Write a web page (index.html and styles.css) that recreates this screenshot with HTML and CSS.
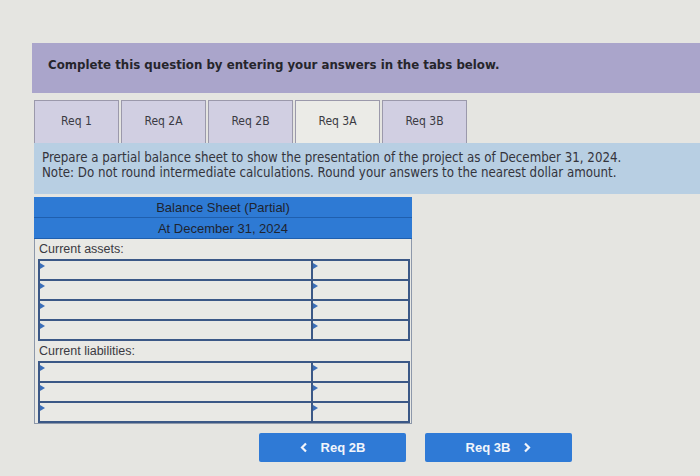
FILE: index.html
```html
<!DOCTYPE html>
<html>
<head>
<meta charset="utf-8">
<link rel="stylesheet" href="styles.css">
</head>
<body>
<div class="page">
  <div class="banner">Complete this question by entering your answers in the tabs below.</div>
  <div class="tabs">
    <div class="tab">Req 1</div>
    <div class="tab">Req 2A</div>
    <div class="tab">Req 2B</div>
    <div class="tab active">Req 3A</div>
    <div class="tab">Req 3B</div>
  </div>
  <div class="instructions">
    <p>Prepare a partial balance sheet to show the presentation of the project as of December 31, 2024.</p>
    <p>Note: Do not round intermediate calculations. Round your answers to the nearest dollar amount.</p>
  </div>
  <div class="sheet">
    <div class="head">Balance Sheet (Partial)</div>
    <div class="head">At December 31, 2024</div>
    <div class="body">
      <div class="label">Current assets:</div>
      <div class="inputs">
        <div class="row"><div class="cell name"></div><div class="cell amt"></div></div>
        <div class="row"><div class="cell name"></div><div class="cell amt"></div></div>
        <div class="row"><div class="cell name"></div><div class="cell amt"></div></div>
        <div class="row"><div class="cell name"></div><div class="cell amt"></div></div>
      </div>
      <div class="label">Current liabilities:</div>
      <div class="inputs">
        <div class="row"><div class="cell name"></div><div class="cell amt"></div></div>
        <div class="row"><div class="cell name"></div><div class="cell amt"></div></div>
        <div class="row"><div class="cell name"></div><div class="cell amt"></div></div>
      </div>
    </div>
  </div>
  <div class="nav">
    <div class="btn"><svg class="chev" width="8" height="11" viewBox="0 0 8 11"><path d="M6 1.5 L2 5.5 L6 9.5" fill="none" stroke="#f2f5fb" stroke-width="2.2"/></svg><span>Req 2B</span></div>
    <div class="btn"><span>Req 3B</span><svg class="chev" width="8" height="11" viewBox="0 0 8 11"><path d="M2 1.5 L6 5.5 L2 9.5" fill="none" stroke="#f2f5fb" stroke-width="2.2"/></svg></div>
  </div>
</div>
</body>
</html>
```
FILE: styles.css
```css
html, body {
  margin: 0;
  padding: 0;
  background: #e5e5e1;
  width: 700px;
  height: 476px;
  overflow: hidden;
}
.page {
  padding-top: 43px;
  font-family: "DejaVu Sans Condensed", "DejaVu Sans", sans-serif;
  color: #2a2a2e;
}
.banner {
  margin-left: 32px;
  height: 50px;
  box-sizing: border-box;
  background: #aaa5cb;
  padding-left: 16px;
  padding-bottom: 7px;
  display: flex;
  align-items: center;
  font-weight: bold;
  font-size: 13.1px;
  color: #26252c;
}
.tabs {
  margin-left: 34px;
  margin-top: 7px;
  display: flex;
  gap: 2px;
}
.tab {
  width: 85px;
  height: 43px;
  box-sizing: border-box;
  background: #d1cfe2;
  border: 1px solid #9b99ab;
  border-bottom: none;
  display: flex;
  align-items: center;
  justify-content: center;
  font-size: 12px;
  color: #3a3a42;
  padding-bottom: 2px;
}
.tab.active {
  background: #ebebe7;
}
.instructions {
  margin-left: 34px;
  height: 51px;
  background: #b8cfe3;
  padding: 8px 8px 0;
  box-sizing: border-box;
  font-size: 13.2px;
  color: #34343c;
  line-height: 14.5px;
}
.instructions p { margin: 0; }
.sheet {
  margin-left: 34px;
  margin-top: 3px;
  width: 378px;
  font-family: "Liberation Sans Narrow", "Liberation Sans", sans-serif;
  font-size: 13px;
}
.head {
  height: 20px;
  background: #2e7ad4;
  border-bottom: 1px solid #1f5fae;
  display: flex;
  align-items: center;
  justify-content: center;
  color: #1e2430;
}
.body {
  border: 1px solid #8d98aa;
  border-top: none;
  background: #e9e9e5;
  padding-right: 1px;
}
.label {
  height: 20px;
  display: flex;
  align-items: center;
  padding-left: 4px;
  color: #3a3a42;
  font-size: 12.5px;
}
.inputs {
  margin-left: 3px;
}
.row {
  display: flex;
  height: 18px;
  border-top: 2px solid #3b5886;
}
.inputs .row:last-child {
  border-bottom: 2px solid #3b5886;
}
.cell {
  position: relative;
  border-left: 2px solid #3b5886;
}
.cell::before {
  content: "";
  position: absolute;
  left: 0;
  top: 2px;
  border-left: 5px solid #3b6eb8;
  border-top: 3px solid transparent;
  border-bottom: 3px solid transparent;
}
.name { width: 271px; }
.amt {
  flex: 1;
  border-right: 2px solid #3b5886;
}
.nav {
  display: flex;
  gap: 19px;
  padding-left: 259px;
  margin-top: 9px;
}
.btn {
  width: 147px;
  height: 29px;
  background: #2f7ad6;
  border-radius: 2px;
  color: #f2f5fb;
  font-family: "Liberation Sans Narrow", "Liberation Sans", sans-serif;
  font-weight: bold;
  font-size: 13px;
  display: flex;
  align-items: center;
  justify-content: center;
  gap: 13px;
}
.chev {
  display: block;
}
```
